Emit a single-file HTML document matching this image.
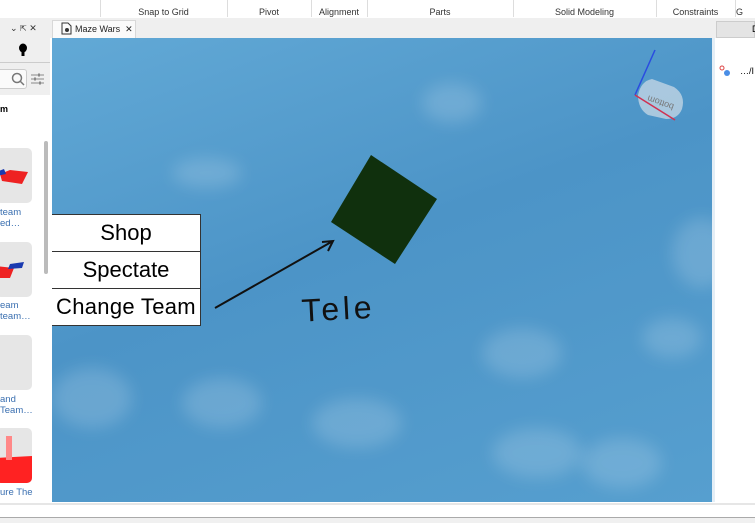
<!DOCTYPE html>
<html><head><meta charset="utf-8"><style>
*{margin:0;padding:0;box-sizing:border-box}
body{width:755px;height:523px;overflow:hidden;background:#fff;font-family:"Liberation Sans",sans-serif;position:relative}
.abs{position:absolute}
.lbl{position:absolute;top:7px;font-size:9px;color:#333;text-align:center}
.sep{position:absolute;top:0;width:1px;height:17px;background:#ddd}
.cap{position:absolute;left:0;font-size:9.5px;color:#3a6fb0;line-height:11px;white-space:nowrap}
.thumb{position:absolute;left:-4px;width:36px;height:55px;background:#e6e6e6;border-radius:5px;overflow:hidden}
.row{height:37px;border-bottom:1px solid #333;font-size:22px;text-align:center;line-height:36px;color:#000;white-space:nowrap}
.cl{position:absolute;background:rgba(255,255,255,0.16);border-radius:50%;filter:blur(8px)}
</style></head><body>
<div class="abs" style="left:0;top:0;width:755px;height:18px;background:#fff"></div>
<div class="sep" style="left:100px"></div>
<div class="sep" style="left:227px"></div>
<div class="sep" style="left:311px"></div>
<div class="sep" style="left:367px"></div>
<div class="sep" style="left:513px"></div>
<div class="sep" style="left:656px"></div>
<div class="sep" style="left:735px"></div>
<div class="lbl" style="left:100px;width:127px">Snap to Grid</div>
<div class="lbl" style="left:227px;width:84px">Pivot</div>
<div class="lbl" style="left:311px;width:56px">Alignment</div>
<div class="lbl" style="left:367px;width:146px">Parts</div>
<div class="lbl" style="left:513px;width:143px">Solid Modeling</div>
<div class="lbl" style="left:656px;width:79px">Constraints</div>
<div class="lbl" style="left:736px;width:20px;text-align:left">G</div>
<div class="abs" style="left:0;top:18px;width:755px;height:20px;background:#efefef"></div>
<div class="abs" style="left:52px;top:20px;width:84px;height:18px;background:#fafafa;border:1px solid #d8d8d8;border-bottom:none;font-size:9px;line-height:16px;padding-left:22px;color:#222">Maze Wars &nbsp;✕</div>
<svg class="abs" style="left:61px;top:22px" width="11" height="13"><path d="M1 1h6l3 3v8H1z" fill="none" stroke="#333"/><circle cx="6" cy="8" r="2" fill="#333"/></svg>
<div class="abs" style="left:716px;top:21px;width:39px;height:17px;background:#e4e4e4;border:1px solid #ccc;font-size:9px;line-height:15px;padding-left:35px">D</div>
<div class="abs" style="left:0;top:18px;width:50px;height:45px;background:#efefef;border-bottom:1px solid #ccc"></div>
<div class="abs" style="left:10px;top:23px;font-size:9px;color:#333">⌄ <span style="font-size:8px">⇱</span> ✕</div>
<svg class="abs" style="left:18px;top:43px" width="10" height="14"><ellipse cx="5" cy="5" rx="4" ry="4.5" fill="#000"/><rect x="3.5" y="8" width="3" height="5" fill="#000"/></svg>
<div class="abs" style="left:0;top:63px;width:50px;height:32px;background:#efefef"></div>
<div class="abs" style="left:-6px;top:69px;width:33px;height:20px;border:1px solid #ccc;background:#fafafa;border-radius:3px"></div>
<svg class="abs" style="left:10px;top:71px" width="16" height="16"><circle cx="7" cy="7" r="4.5" fill="none" stroke="#777" stroke-width="1.5"/><path d="M10 10l4 4" stroke="#777" stroke-width="1.5"/></svg>
<svg class="abs" style="left:31px;top:73px" width="13" height="12"><path d="M0 2h13M0 6h13M0 10h13" stroke="#888"/><rect x="7" y="0.5" width="2" height="3" fill="#888"/><rect x="3" y="4.5" width="2" height="3" fill="#888"/><rect x="8" y="8.5" width="2" height="3" fill="#888"/></svg>
<div class="abs" style="left:0;top:104px;font-size:9px;font-weight:bold">m</div>
<div class="abs" style="left:44px;top:141px;width:4px;height:133px;background:#bbb;border-radius:2px"></div>
<div class="thumb" style="top:148px"><svg width="36" height="55"><path d="M4 26l10-4 18 2-6 12-20-3z" fill="#e22"/><path d="M0 24l8-3 2 5-10 2z" fill="#1a3ab0"/></svg></div>
<div class="cap" style="top:207px">team<br>ed…</div>
<div class="thumb" style="top:242px"><svg width="36" height="55"><path d="M0 24l18 2-4 10H0z" fill="#e22"/><path d="M14 22l14-2-2 6-14 1z" fill="#1a3ab0"/></svg></div>
<div class="cap" style="top:300px">eam<br>team…</div>
<div class="thumb" style="top:335px"></div>
<div class="cap" style="top:394px">and<br>Team…</div>
<div class="thumb" style="top:428px"><svg width="36" height="55"><path d="M0 30l36-2v27H0z" fill="#f22"/><rect x="10" y="8" width="6" height="24" fill="#f88"/></svg></div>
<div class="cap" style="top:487px">ure The</div>
<div class="abs" style="left:52px;top:38px;width:660px;height:464px;background:linear-gradient(160deg,#62a9d6 0%,#4c94c7 45%,#569fcf 100%);overflow:hidden">
<div class="cl" style="left:120px;top:120px;width:70px;height:30px"></div>
<div class="cl" style="left:370px;top:45px;width:60px;height:40px"></div>
<div class="cl" style="left:620px;top:180px;width:60px;height:70px"></div>
<div class="cl" style="left:430px;top:290px;width:80px;height:50px"></div>
<div class="cl" style="left:0;top:330px;width:80px;height:60px"></div>
<div class="cl" style="left:130px;top:340px;width:80px;height:50px"></div>
<div class="cl" style="left:260px;top:360px;width:90px;height:50px"></div>
<div class="cl" style="left:440px;top:390px;width:90px;height:50px"></div>
<div class="cl" style="left:530px;top:400px;width:80px;height:50px"></div>
<div class="cl" style="left:590px;top:280px;width:60px;height:40px"></div>
</div>
<div class="abs" style="left:712px;top:38px;width:3px;height:464px;background:#e4eef6"></div>
<svg class="abs" style="left:52px;top:38px" width="660" height="464">
<polygon points="319,117 385,161 343,226 279,184" fill="#10300d"/>
<path d="M163 270L281 203M270 204L281 203L276 213" fill="none" stroke="#111" stroke-width="2"/>
<text x="250" y="282" font-family="Liberation Sans" font-size="32" font-weight="normal" fill="#111" transform="rotate(-3 280 280)" textLength="70">Tele</text>
<path d="M586 57q3-14 14-16l22 8q12 8 8 22-4 10-16 10l-18-4q-10-6-10-20z" fill="#c8d8e6" opacity="0.75"/>
<text x="596" y="58" font-size="9" fill="#777" transform="rotate(200 610 60)">bottom</text>
<path d="M583 57L603 12" stroke="#2a4ce0" stroke-width="1.5"/>
<path d="M583 57L623 82" stroke="#d03050" stroke-width="1.5"/>
</svg>
<svg class="abs" style="left:719px;top:65px" width="12" height="12"><circle cx="3" cy="3" r="2" fill="none" stroke="#d44"/><circle cx="8" cy="8" r="3" fill="#4a8ee6"/></svg>
<div class="abs" style="left:740px;top:66px;font-size:9px">…/I</div>
<div class="abs" style="left:0;top:503px;width:755px;height:2px;background:#e6e6e6"></div>
<div class="abs" style="left:0;top:517px;width:755px;height:1px;background:#aaa"></div>
<div class="abs" style="left:0;top:518px;width:755px;height:5px;background:#f0f0f0"></div>
<div class="abs" style="left:52px;top:214px;width:149px;height:112px;background:#fff;border:1px solid #333;border-left:none">
<div class="row">Shop</div><div class="row">Spectate</div><div class="row" style="border:none;letter-spacing:0.3px">Change Team</div>
</div>
</body></html>
